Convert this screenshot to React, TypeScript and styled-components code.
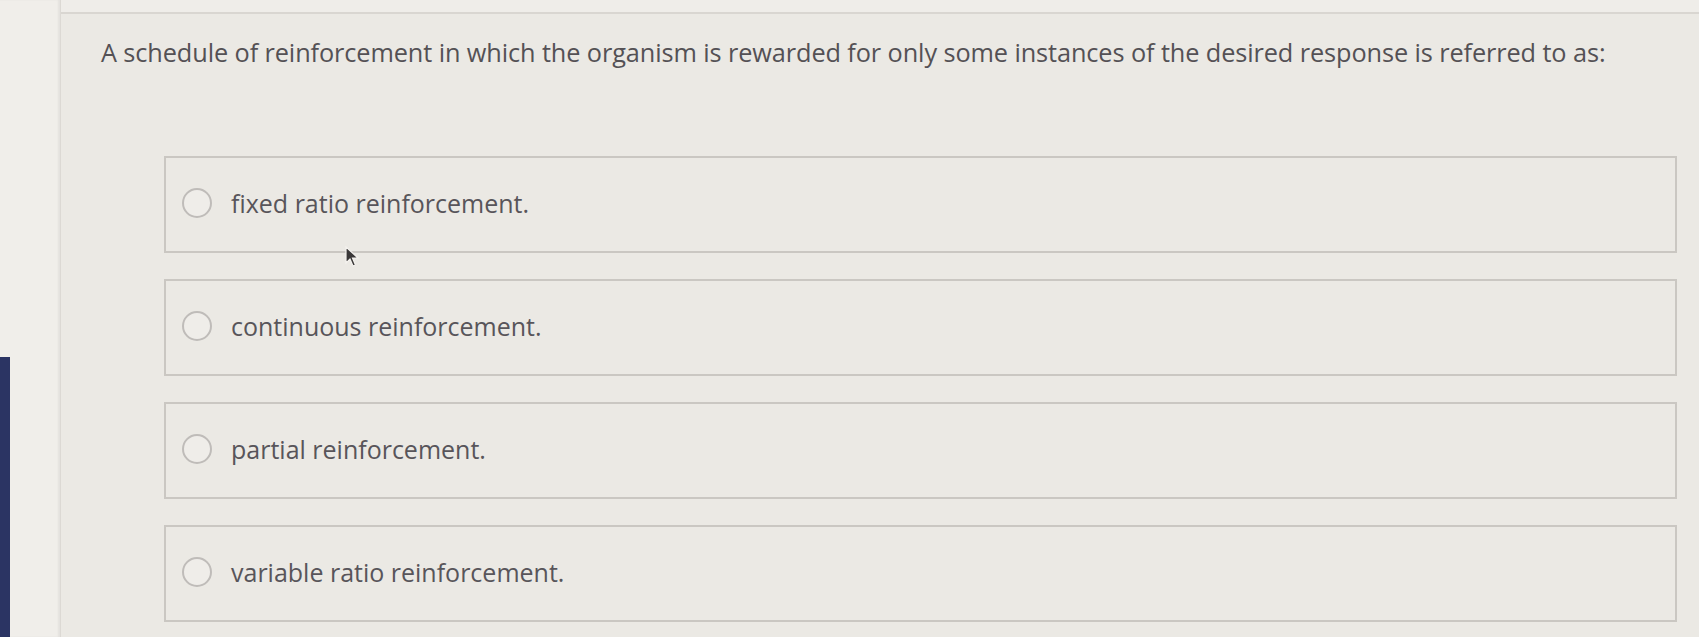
import styled, { createGlobalStyle } from "styled-components";

const GlobalStyle = createGlobalStyle`
  html, body {
    margin: 0;
    padding: 0;
    background: #ebe9e4;
  }
  body {
    font-family: "Open Sans", "Liberation Sans", sans-serif;
  }
`;

const Screen = styled.div`
  position: relative;
  display: flex;
  width: 1699px;
  height: 637px;
  overflow: hidden;
  background: #ebe9e4;
`;

const LeftRail = styled.div`
  width: 60px;
  flex-shrink: 0;
  background:
    linear-gradient(#2b3463, #2b3463) left bottom / 10px 44% no-repeat,
    #f0eeea;
  box-shadow: inset -2px 0 2px rgba(0, 0, 0, 0.05);
  border-right: 1px solid #dcd9d4;
`;

const Main = styled.div`
  flex: 1;
  display: flex;
  flex-direction: column;
`;

const TopStrip = styled.div`
  height: 12px;
  background: #efede9;
  border-bottom: 2px solid #d9d6d1;
`;

const Content = styled.div`
  display: flex;
  flex-direction: column;
  padding: 21px 22px 0 40px;
`;

const Question = styled.p`
  margin: 0 0 87px;
  font-size: 25.3px;
  line-height: 34px;
  color: #545155;
  letter-spacing: -0.1px;
`;

const Options = styled.div`
  display: flex;
  flex-direction: column;
  gap: 26px;
  margin-left: 63px;
`;

const Option = styled.label`
  display: flex;
  align-items: center;
  gap: 19px;
  height: 89px;
  padding: 0 0 4px 16px;
  border: 2px solid #cac7c2;
  color: #58555a;
  font-size: 25px;
  cursor: pointer;
`;

const Radio = styled.span`
  width: 26px;
  height: 26px;
  border-radius: 50%;
  border: 2px solid #bfbcb9;
  background: #efede9;
  flex-shrink: 0;
`;

const Cursor = styled.svg`
  position: absolute;
  left: 345px;
  top: 246px;
`;

const options = [
  "fixed ratio reinforcement.",
  "continuous reinforcement.",
  "partial reinforcement.",
  "variable ratio reinforcement.",
];

export default function App() {
  return (
    <>
      <GlobalStyle />
      <Screen>
        <LeftRail />
        <Main>
          <TopStrip />
          <Content>
            <Question>
              A schedule of reinforcement in which the organism is rewarded for
              only some instances of the desired response is referred to as:
            </Question>
            <Options>
              {options.map((text) => (
                <Option key={text}>
                  <Radio />
                  {text}
                </Option>
              ))}
            </Options>
          </Content>
        </Main>
        <Cursor width="16" height="22" viewBox="0 0 16 22">
          <path
            d="M1 1 L1 17 L5 13 L8 20 L10.5 19 L7.5 12 L13 12 Z"
            fill="#3a3838"
            stroke="#f4f2ee"
            strokeWidth="1.2"
          />
        </Cursor>
      </Screen>
    </>
  );
}
